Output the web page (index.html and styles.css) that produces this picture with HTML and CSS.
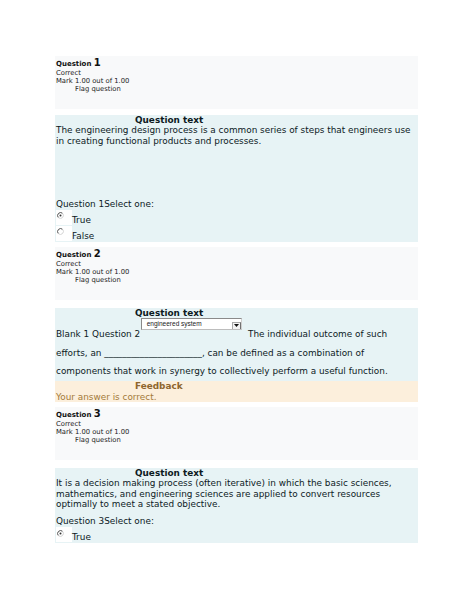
FILE: index.html
```html
<!DOCTYPE html>
<html lang="en">
<head>
<meta charset="utf-8">
<title>Quiz review</title>
<link rel="stylesheet" href="styles.css">
</head>
<body>
<div class="page">

  <div class="que">
    <div class="info info-q1">
      <h3 class="qno-line">Question <span class="qno">1</span></h3>
      <div class="meta">Correct</div>
      <div class="meta">Mark 1.00 out of 1.00</div>
      <div class="meta flag">Flag question</div>
    </div>
    <div class="formulation">
      <h4 class="qtext-heading">Question text</h4>
      <p class="qtext">The engineering design process is a common series of steps that engineers use in creating functional products and processes.</p>
      <div class="prompt prompt-far">Question 1Select one:</div>
      <div class="option">
        <span class="radio-box"><svg class="radio" width="7" height="7" viewBox="0 0 7 7"><path d="M1.38 5.62 A3 3 0 0 1 5.62 1.38" fill="none" stroke="#4a4a4a" stroke-width="1"/><path d="M5.62 1.38 A3 3 0 0 1 1.38 5.62" fill="none" stroke="#d2d2d2" stroke-width="1"/><circle cx="3.5" cy="3.5" r="1" fill="#333"/></svg></span>
        <span class="option-label">True</span>
      </div>
      <div class="option">
        <span class="radio-box"><svg class="radio" width="7" height="7" viewBox="0 0 7 7"><path d="M1.38 5.62 A3 3 0 0 1 5.62 1.38" fill="none" stroke="#4a4a4a" stroke-width="1"/><path d="M5.62 1.38 A3 3 0 0 1 1.38 5.62" fill="none" stroke="#d2d2d2" stroke-width="1"/></svg></span>
        <span class="option-label">False</span>
      </div>
    </div>
  </div>

  <div class="que">
    <div class="info info-q2">
      <h3 class="qno-line">Question <span class="qno">2</span></h3>
      <div class="meta">Correct</div>
      <div class="meta">Mark 1.00 out of 1.00</div>
      <div class="meta flag">Flag question</div>
    </div>
    <div class="formulation">
      <h4 class="qtext-heading">Question text</h4>
      <p class="qtext qtext-blanks">Blank 1 Question 2<span class="select"><span class="select-inner"><span class="select-value">engineered system</span><span class="select-button"><svg width="5" height="3" viewBox="0 0 5 3"><path d="M0 0 H5 L2.5 3 Z" fill="#111"/></svg></span></span></span> The individual outcome of such efforts, an ______________________, can be defined as a combination of components that work in synergy to collectively perform a useful function.</p>
    </div>
    <div class="outcome">
      <h4 class="feedback-heading">Feedback</h4>
      <div class="feedback-text">Your answer is correct.</div>
    </div>
  </div>

  <div class="que">
    <div class="info info-q3">
      <h3 class="qno-line">Question <span class="qno">3</span></h3>
      <div class="meta">Correct</div>
      <div class="meta">Mark 1.00 out of 1.00</div>
      <div class="meta flag">Flag question</div>
    </div>
    <div class="formulation">
      <h4 class="qtext-heading">Question text</h4>
      <p class="qtext">It is a decision making process (often iterative) in which the basic sciences, mathematics, and engineering sciences are applied to convert resources optimally to meet a stated objective.</p>
      <div class="prompt prompt-near">Question 3Select one:</div>
      <div class="option">
        <span class="radio-box"><svg class="radio" width="7" height="7" viewBox="0 0 7 7"><path d="M1.38 5.62 A3 3 0 0 1 5.62 1.38" fill="none" stroke="#4a4a4a" stroke-width="1"/><path d="M5.62 1.38 A3 3 0 0 1 1.38 5.62" fill="none" stroke="#d2d2d2" stroke-width="1"/><circle cx="3.5" cy="3.5" r="1" fill="#333"/></svg></span>
        <span class="option-label">True</span>
      </div>
    </div>
  </div>

</div>
</body>
</html>
```
FILE: styles.css
```css
html, body {
  margin: 0;
  padding: 0;
  background: #ffffff;
}

body {
  font-family: "DejaVu Sans", Verdana, sans-serif;
  font-size: 8.9px;
  line-height: 10.4px;
  color: #1a1d20;
}

.page {
  padding: 56px 0 0 55px;
  width: 363px;
}

.que {
  margin-bottom: 5px;
}

/* ---------- info block ---------- */
.info {
  background: #f8f9fa;
  height: 53px;
  box-sizing: border-box;
  padding: 2.2px 0 0 1px;
}

.info-q1 { margin-bottom: 5.8px; }
.info-q2 { margin-bottom: 8px; }
.info-q3 { margin-bottom: 8px; }

.qno-line {
  margin: 0;
  font-size: 7px;
  font-weight: bold;
  line-height: 10px;
  color: #111;
}

.qno {
  font-size: 10px;
}

.meta {
  font-size: 6.8px;
  line-height: 8px;
  color: #222;
}

.flag {
  padding-left: 19px;
}

/* ---------- formulation ---------- */
.formulation {
  background: #e7f3f5;
  padding-left: 1px;
  color: #0d1a1e;
}

.qtext-heading {
  margin: 0 0 0 79px;
  font-size: 8.9px;
  font-weight: bold;
  line-height: 10.4px;
}

.qtext {
  margin: 0;
  line-height: 10.4px;
}

.qtext-blanks {
  line-height: 18.5px;
  margin-bottom: -4.5px;
}

.prompt {
  line-height: 10.4px;
}

.prompt-far { margin-top: 52.6px; }
.prompt-near { margin-top: 6.2px; }

.option {
  display: flex;
  height: 16px;
  margin-top: 0.8px;
}

.option + .option {
  margin-top: 0;
}

.radio-box {
  width: 16px;
  height: 15px;
  background: #ffffff;
  flex: none;
}

.radio {
  display: block;
  margin: 2.5px 0 0 0.5px;
}

.option-label {
  margin-top: 4.8px;
  line-height: 10.4px;
}

/* ---------- select ---------- */
.select {
  display: inline-block;
  vertical-align: 7px;
  width: 101px;
  height: 12px;
  box-sizing: border-box;
  border: 1px solid #8a8a8a;
  border-right-color: #cfcfcf;
  border-bottom-color: #bdbdbd;
  background: #ffffff;
  overflow: hidden;
  line-height: 7px;
  margin: 0 3px 0 1px;
}

.select-inner {
  display: flex;
  justify-content: space-between;
  align-items: flex-start;
  height: 100%;
}

.select-value {
  font-family: "Liberation Sans", Arial, sans-serif;
  font-size: 6.5px;
  line-height: 7px;
  padding: 1px 0 0 4.5px;
  color: #222;
}

.select-button {
  width: 7px;
  height: 6px;
  margin: 2.5px 0.5px 0 0;
  border: 1px solid #a8a8a8;
  border-right-color: #707070;
  border-bottom-color: #707070;
  background: #f2f2f2;
  display: flex;
  align-items: center;
  justify-content: center;
}

.select-button svg {
  display: block;
}

/* ---------- outcome ---------- */
.outcome {
  background: #fcefdc;
  margin-top: 5px;
  padding-left: 1px;
  color: #8e662e;
}

.feedback-heading {
  margin: 0 0 0 79px;
  font-size: 8.9px;
  font-weight: bold;
  line-height: 10.4px;
}

.feedback-text {
  line-height: 10.4px;
  color: #a37a3a;
}
```
